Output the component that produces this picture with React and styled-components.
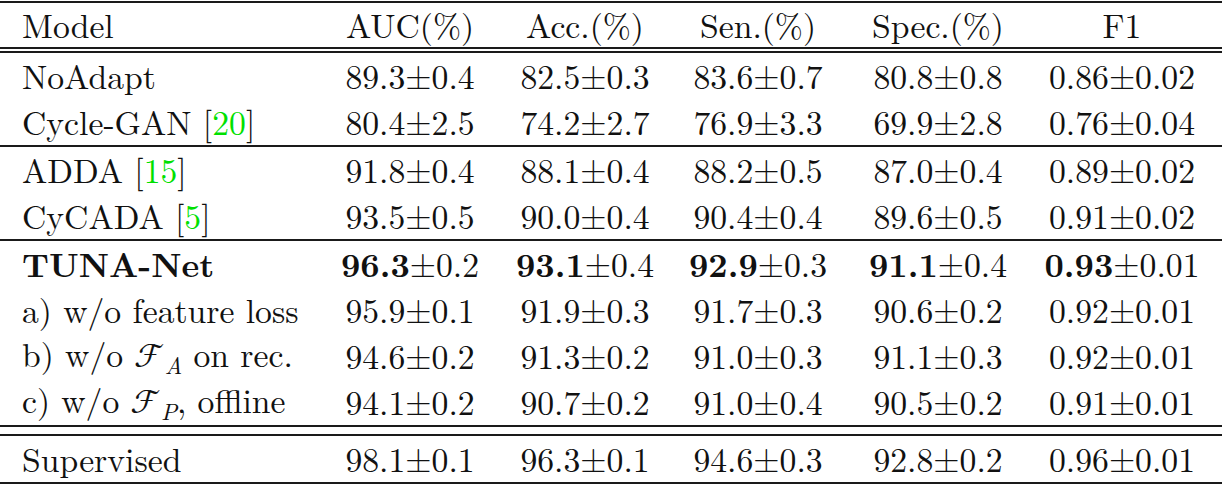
import React from "react";
import styled, { createGlobalStyle } from "styled-components";

const Global = createGlobalStyle`
  html, body { margin: 0; padding: 0; background: #fff; }
`;

const Table = styled.div`
  width: 1222px;
  padding-top: 1px;
  display: flex;
  flex-direction: column;
  font-family: "Latin Modern Roman", "Liberation Serif", serif;
  color: #111;
`;

const Rule = styled.div`
  height: ${(p) => (p.$gap ? `${p.$gap + 4}px` : "2px")};
  border-top: 2px solid #1a1a1a;
  border-bottom: ${(p) => (p.$gap ? "2px solid #1a1a1a" : "none")};
  box-sizing: border-box;
`;

const Row = styled.div`
  display: grid;
  grid-template-columns: 330px 160px 190px 156px 204px 164px 18px;
  height: ${(p) => p.$h || 46}px;
  align-items: center;
  font-size: 33.7px;
  line-height: 1;
`;

const Cell = styled.div`
  text-align: ${(p) => (p.$left ? "left" : "center")};
  padding-left: ${(p) => (p.$left ? "22px" : "0")};
  white-space: nowrap;
  font-weight: ${(p) => (p.$bold ? 700 : 400)};
`;

const Bold = styled.b`
  font-weight: 700;
`;

const Cite = styled.span`
  color: #00e000;
`;

const Cal = styled.span`
  font-family: "Latin Modern Math", "DejaVu Serif", serif;
`;

const Sub = styled.sub`
  font-family: "Latin Modern Roman", serif;
  font-style: italic;
  font-size: 0.7em;
  vertical-align: -0.3em;
  line-height: 0;
`;

const Value = ({ v, bold }) => {
  const [a, b] = v.split("±");
  return (
    <Cell>
      {bold ? <Bold>{a}</Bold> : a}±{b}
    </Cell>
  );
};

const groups = [
  [
    { name: "NoAdapt", vals: ["89.3±0.4", "82.5±0.3", "83.6±0.7", "80.8±0.8", "0.86±0.02"] },
    { name: <>Cycle-GAN [<Cite>20</Cite>]</>, vals: ["80.4±2.5", "74.2±2.7", "76.9±3.3", "69.9±2.8", "0.76±0.04"] },
  ],
  [
    { name: <>ADDA [<Cite>15</Cite>]</>, vals: ["91.8±0.4", "88.1±0.4", "88.2±0.5", "87.0±0.4", "0.89±0.02"] },
    { name: <>CyCADA [<Cite>5</Cite>]</>, vals: ["93.5±0.5", "90.0±0.4", "90.4±0.4", "89.6±0.5", "0.91±0.02"] },
  ],
  [
    { name: "TUNA-Net", bold: true, vals: ["96.3±0.2", "93.1±0.4", "92.9±0.3", "91.1±0.4", "0.93±0.01"] },
    { name: "a) w/o feature loss", vals: ["95.9±0.1", "91.9±0.3", "91.7±0.3", "90.6±0.2", "0.92±0.01"] },
    { name: <>b) w/o <Cal>ℱ</Cal><Sub>A</Sub> on rec.</>, vals: ["94.6±0.2", "91.3±0.2", "91.0±0.3", "91.1±0.3", "0.92±0.01"] },
    { name: <>c) w/o <Cal>ℱ</Cal><Sub>P</Sub>, offline</>, vals: ["94.1±0.2", "90.7±0.2", "91.0±0.4", "90.5±0.2", "0.91±0.01"] },
  ],
];

const supervised = { name: "Supervised", vals: ["98.1±0.1", "96.3±0.1", "94.6±0.3", "92.8±0.2", "0.96±0.01"] };

const DataRow = ({ r }) => (
  <Row>
    <Cell $left $bold={r.bold}>{r.name}</Cell>
    {r.vals.map((v, i) => (
      <Value key={i} v={v} bold={r.bold} />
    ))}
    <Cell />
  </Row>
);

export default function App() {
  return (
    <>
      <Global />
      <Table>
        <Rule />
        <Row $h={44}>
          <Cell $left>Model</Cell>
          <Cell>AUC(%)</Cell>
          <Cell>Acc.(%)</Cell>
          <Cell>Sen.(%)</Cell>
          <Cell>Spec.(%)</Cell>
          <Cell>F1</Cell>
          <Cell />
        </Row>
        <Rule $gap={2} />
        {groups.map((g, gi) => (
          <React.Fragment key={gi}>
            {gi > 0 && <Rule />}
            {g.map((r, ri) => (
              <DataRow key={ri} r={r} />
            ))}
          </React.Fragment>
        ))}
        <Rule $gap={7} />
        <DataRow r={supervised} />
        <Rule />
      </Table>
    </>
  );
}
